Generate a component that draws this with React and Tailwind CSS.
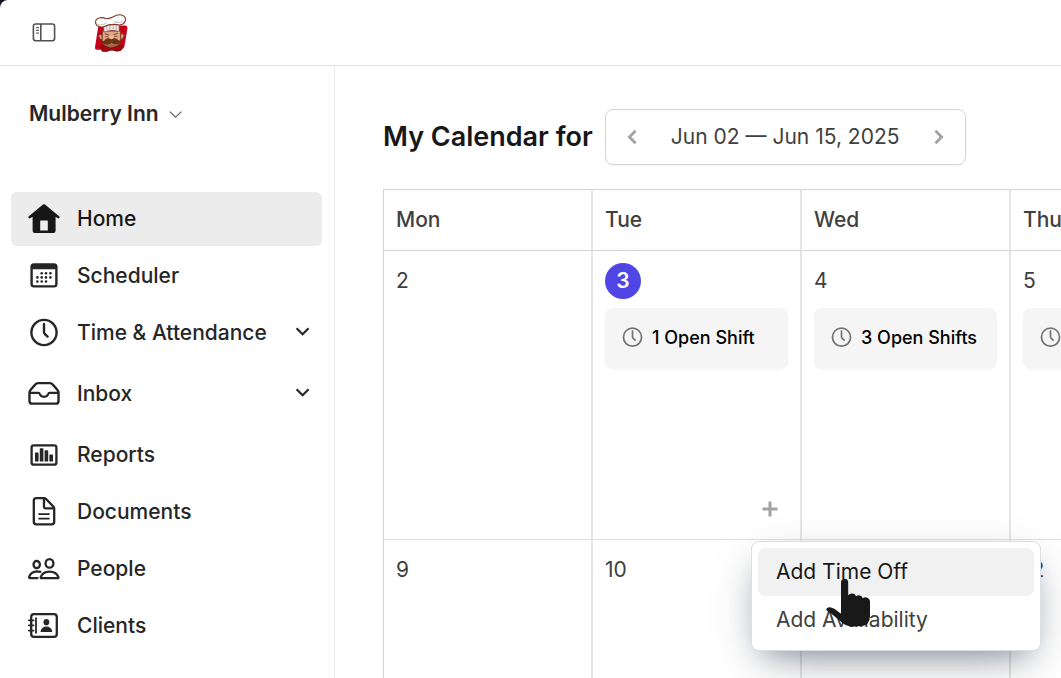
import React, { useState } from 'react';

const HomeIcon = () => (
  <svg viewBox="0 0 32 32" className="w-8 h-8 shrink-0" aria-hidden="true">
    <path
      d="M15 1.6Q16 .8 17 1.6L31.4 13.6Q32 14.4 31.3 15.1Q30.7 15.7 29.8 15.3L27.6 13.8V27.7Q27.6 29.9 25.4 29.9H6.8Q4.6 29.9 4.6 27.7V13.8L2.2 15.3Q1.3 15.7 .7 15.1Q0 14.4 .6 13.6ZM12.2 18.2V27.6H19.8V18.2Q19.8 17.6 19.2 17.6H12.8Q12.2 17.6 12.2 18.2Z"
      fill="currentColor"
      fillRule="evenodd"
    />
  </svg>
);

const SchedulerIcon = () => (
  <svg viewBox="0 0 32 32" className="w-8 h-8 shrink-0" aria-hidden="true">
    <rect x="3.6" y="4.5" width="24.8" height="21.9" rx="2.4" fill="none" stroke="currentColor" strokeWidth="2.4" />
    <path d="M3.4 9.2V6.5Q3.4 4 6 4H26Q28.6 4 28.6 6.5V9.2Z" fill="currentColor" />
    <g fill="currentColor">
      <circle cx="13.7" cy="13.2" r="1.3" />
      <circle cx="18" cy="13.2" r="1.3" />
      <circle cx="22.4" cy="13.2" r="1.3" />
      <circle cx="9.4" cy="17.4" r="1.3" />
      <circle cx="13.7" cy="17.4" r="1.3" />
      <circle cx="18" cy="17.4" r="1.3" />
      <circle cx="22.4" cy="17.4" r="1.3" />
      <circle cx="9.4" cy="21.5" r="1.3" />
      <circle cx="13.7" cy="21.5" r="1.3" />
      <circle cx="18" cy="21.5" r="1.3" />
    </g>
  </svg>
);

const ClockIcon = ({ className = 'w-8 h-8' }) => (
  <svg viewBox="0 0 32 32" className={`${className} shrink-0`} fill="none" stroke="currentColor" strokeWidth="2.4" strokeLinecap="round" strokeLinejoin="round" aria-hidden="true">
    <circle cx="16" cy="15.5" r="12.6" />
    <path d="M16 7V15Q16 16.2 16.8 17L19.6 19.6" />
  </svg>
);

const InboxIcon = () => (
  <svg viewBox="0 0 32 32" className="w-8 h-8 shrink-0" fill="none" stroke="currentColor" strokeWidth="2.4" strokeLinejoin="round" aria-hidden="true">
    <path d="M1.5 14.8Q1.5 13.2 2.5 12L7.2 6.6Q8.4 5.1 10.2 5.1H21.8Q23.6 5.1 24.8 6.6L29.5 12Q30.5 13.2 30.5 14.8V22.9Q30.5 25.6 27.8 25.6H4.2Q1.5 25.6 1.5 22.9Z" />
    <path d="M1.4 14.8H10.4Q11.6 14.8 11.8 16Q12.6 18.8 16 18.8Q19.4 18.8 20.2 16Q20.4 14.8 21.6 14.8H30.6" strokeWidth="2.2" />
  </svg>
);

const ReportsIcon = () => (
  <svg viewBox="0 0 32 32" className="w-8 h-8 shrink-0" aria-hidden="true">
    <rect x="3.6" y="6.3" width="24.8" height="19.4" rx="2.2" fill="none" stroke="currentColor" strokeWidth="2.3" />
    <g fill="currentColor">
      <rect x="7" y="13.4" width="3.6" height="9.1" rx=".6" />
      <rect x="11.8" y="9.2" width="3.6" height="13.3" rx=".6" />
      <rect x="16.6" y="11.2" width="3.6" height="11.3" rx=".6" />
      <rect x="21.4" y="15.6" width="3.6" height="6.9" rx=".6" />
    </g>
  </svg>
);

const DocumentsIcon = () => (
  <svg viewBox="0 0 32 32" className="w-8 h-8 shrink-0" fill="none" stroke="currentColor" strokeWidth="2.3" strokeLinejoin="round" aria-hidden="true">
    <path d="M16 2.1H8.4Q5.8 2.1 5.8 4.6V25.8Q5.8 28.4 8.4 28.4H23.6Q26.2 28.4 26.2 25.8V12.6Q26.2 11.4 25.4 10.6L17.8 2.8Q17 2.1 16 2.1Z" />
    <path d="M16 2V10.4Q16 12.4 18 12.4H26" />
    <path d="M10.4 18.2H21.6M10.4 22.6H21.6" strokeWidth="1.8" />
  </svg>
);

const PeopleIcon = () => (
  <svg viewBox="0 0 32 32" className="w-8 h-8 shrink-0" fill="none" stroke="currentColor" strokeWidth="2.3" strokeLinecap="round" strokeLinejoin="round" aria-hidden="true">
    <ellipse cx="8.7" cy="11.6" rx="3.2" ry="3.6" />
    <ellipse cx="21.5" cy="10.4" rx="3.9" ry="4.3" />
    <path d="M13.6 25.2Q12.4 25.2 12.8 23.9Q14.8 18.6 21.5 18.6Q28.4 18.6 30.3 23.9Q30.7 25.2 29.6 25.2Z" />
    <path d="M12.2 18.9Q10.6 18.4 8.9 18.4Q3 18.8 1.3 23.6Q.9 25.2 2 25.2H9.4" />
  </svg>
);

const ClientsIcon = () => (
  <svg viewBox="0 0 32 32" className="w-8 h-8 shrink-0" aria-hidden="true">
    <rect x="3.2" y="4.2" width="25.6" height="22.6" rx="2.8" fill="none" stroke="currentColor" strokeWidth="2.3" />
    <path d="M8 7.6V23.6" stroke="currentColor" strokeWidth="1.8" />
    <path d="M.8 10.4H5.6M.8 15.4H5.6M.8 20.6H5.6" stroke="currentColor" strokeWidth="1.7" strokeLinecap="round" />
    <ellipse cx="18.4" cy="12.2" rx="2.9" ry="3.1" fill="currentColor" />
    <path d="M12.8 22Q12.4 22 12.6 21Q13.8 16.4 18.4 16.4Q23 16.4 24.2 21Q24.4 22 24 22Z" fill="currentColor" />
  </svg>
);

const Chevron = ({ d, className }) => (
  <svg viewBox="0 0 16 16" className={`${className} shrink-0`} fill="none" stroke="currentColor" aria-hidden="true">
    <path d={d} />
  </svg>
);

const SidebarToggleIcon = () => (
  <svg viewBox="0 0 24 24" className="w-6 h-6" fill="none" stroke="currentColor" strokeWidth="1.6" aria-hidden="true">
    <rect x="1.4" y="3" width="21.2" height="16.8" rx="2.2" />
    <path d="M8.8 3V19.8" />
    <path d="M4.2 6.6H6.8M4.2 9.4H6.8M4.2 12.2H6.8" strokeWidth="1.2" />
  </svg>
);

const ChefLogo = () => (
  <svg viewBox="0 0 36 40" className="w-9 h-10" aria-hidden="true">
    <path d="M5.4 12.8L32 12.4Q34.8 12.6 34.4 15.6L31.4 33.6Q30.8 36 28.6 36.2L4.4 36.8Q1.8 36.8 2 34.2Z" fill="#c4001a" />
    <path d="M9 22Q5.8 20.4 5.8 23.6Q6.2 26.6 9.6 27ZM27.8 21.2Q31 20 31 23Q30.4 26 27.2 26.6Z" fill="#d9a27e" stroke="#7d3a22" strokeWidth=".8" />
    <path d="M9.4 18H27.6V26Q27 34.2 18.3 35.2Q10 34.4 9.2 26.4Z" fill="#dba683" stroke="#7d3a22" strokeWidth=".9" />
    <path d="M10 28Q12 34.6 18.3 35.2Q25 34.6 27 27.6Z" fill="#a5694a" />
    <path d="M10.6 12.6Q18 9.6 26 11.2L26.2 18.4Q18 16 11 19Z" fill="#f0ebe8" stroke="#8a5240" strokeWidth=".7" />
    <path d="M14 12.4V17.2M17 12V16.8M20.2 11.8V16.8M23.2 12V17.2" stroke="#b5a8a2" strokeWidth=".9" />
    <path d="M10.6 13.8Q4.6 14.6 2.8 10.8Q1.6 6.6 6 5Q9.6 4 13 5.8Q17.4 5.6 20.4 3.8Q24.4 1.2 28.6 2Q33.2 3.2 32.4 7.6Q31.2 11.6 26.4 12Q18 10.2 10.6 13.8Z" fill="#fff" stroke="#7e3626" strokeWidth="1.1" />
    <path d="M5 11Q10 13 13.4 9.6M21 8.6Q26 10.6 30.6 7.8" fill="none" stroke="#d0c6c1" strokeWidth="1.2" />
    <path d="M12 20.6L16 22M20.8 21.8L24.8 20.2" stroke="#8c5238" strokeWidth="1.2" />
    <path d="M12.4 24Q14.2 22.8 15.8 24.2M21 24Q22.6 22.6 24.4 23.6" fill="none" stroke="#7b3e28" strokeWidth=".8" />
    <ellipse cx="18.4" cy="24.6" rx="2.3" ry="2.1" fill="#efbd99" />
    <path d="M18.4 26.2Q13.8 24 11.4 27.4Q10 29 7.6 28Q10 32.4 14.8 31.4Q17.4 30.8 18.4 29.4Q19.8 30.8 22.4 31.2Q27 31.6 29.4 27.2Q26.8 28.6 25.2 27Q22.6 24 18.4 26.2Z" fill="#6b3415" />
    <path d="M17.6 35.2L11.4 32.8Q7.6 32.4 8.2 35L9 38.2Q13.4 39.4 17.6 37.2L20.2 37.2Q24 39.2 28.2 37.2L29.6 33.8Q29.2 32.2 26.6 32.6Z" fill="#a3080f" stroke="#6d100f" strokeWidth=".8" />
  </svg>
);

const PointerHand = () => (
  <svg viewBox="0 0 45 50" className="w-[45px] h-[50px]" aria-hidden="true">
    <path
      d="M15 4.6Q15 .8 18.6 .8Q22.2 .8 22.2 4.6V17.2Q24 15.2 26.8 15.6Q29.2 16 30 18.2Q31.8 16.8 34 17.4Q36.2 18 36.8 20.2Q38.6 18.8 40.8 19.4Q44 20.4 44 24V38Q44 48.2 34 48.2H26Q20.6 48.2 17.2 45.4L4.8 35.2Q.2 33 .2 31Q1.4 28.8 5 29.4Q8.4 30.2 11.4 33Q13.4 35 15 35.4Z"
      fill="#191919"
    />
  </svg>
);

const DOWN = 'M2.6 3.2L8.6 9.2L14.6 3.2';

const navItems = [
  { name: 'Home', icon: HomeIcon },
  { name: 'Scheduler', icon: SchedulerIcon },
  { name: 'Time & Attendance', icon: ClockIcon, expandable: true },
  { name: 'Inbox', icon: InboxIcon, expandable: true },
  { name: 'Reports', icon: ReportsIcon },
  { name: 'Documents', icon: DocumentsIcon },
  { name: 'People', icon: PeopleIcon },
  { name: 'Clients', icon: ClientsIcon },
];

const weekdays = ['Mon', 'Tue', 'Wed', 'Thu', 'Fri', 'Sat', 'Sun'];

const weeks = [
  [2, 3, 4, 5, 6, 7, 8],
  [9, 10, 11, 12, 13, 14, 15],
];

const openShifts = { 3: 1, 4: 3, 5: 2 };
const today = 3;

function Sidebar() {
  const [active, setActive] = useState('Home');
  const base = 'flex w-full h-[54px] items-center gap-[17px] rounded-md pl-[17px] pr-3 text-left';

  return (
    <aside className="w-[335px] shrink-0 border-r border-[#ebebeb] pt-6 pl-[11px] pr-3">
      <button type="button" className="flex h-12 items-center gap-2 pl-[18px] text-[21px] font-semibold text-[#262626]">
        Mulberry Inn
        <Chevron d="M2.8 5.6L8.6 11.2L14.4 5.6" className="w-4 h-4 stroke-[1.3] text-[#666]" />
      </button>

      <nav className="mt-[54px] flex flex-col gap-[3px]">
        {navItems.map(({ name, icon: Icon, expandable }) => {
          const className = active === name ? `${base} bg-[#ececec] text-[#171717]` : `${base} text-[#262626]`;
          if (expandable) {
            return (
              <div key={name} className="pb-1">
                <button type="button" className={className} onClick={() => setActive(name)}>
                  <Icon />
                  <span className="grow text-[21px] font-medium">{name}</span>
                  <Chevron d={DOWN} className="w-4 h-4 stroke-[2.2]" />
                </button>
              </div>
            );
          }
          return (
            <a key={name} href="#" className={className} onClick={() => setActive(name)}>
              <Icon />
              <span className="text-[21px] font-medium">{name}</span>
            </a>
          );
        })}
      </nav>
    </aside>
  );
}

function AddMenu() {
  return (
    <div className="absolute right-3 bottom-3 z-10">
      <button type="button" aria-label="Add" className="flex w-9 h-9 items-center justify-center text-[#a3a3a3]">
        <svg viewBox="0 0 16 16" className="w-4 h-4" stroke="currentColor" strokeWidth="3" aria-hidden="true">
          <path d="M8 .5V15.5M.5 8H15.5" />
        </svg>
      </button>
      <div
        role="menu"
        className="absolute -left-px top-[50px] w-[290px] rounded-lg border border-[#d9dfe3] bg-white p-[6px] text-[21px] shadow-[0_15px_53px_-15px_rgba(14,18,22,0.35),0_15px_30px_-12px_rgba(45,75,105,0.4)]"
      >
        <button type="button" role="menuitem" className="block h-12 w-full rounded-lg bg-[#f1f1f1] pl-[18px] text-left text-[#171717]">
          Add Time Off
        </button>
        <button type="button" role="menuitem" className="block h-12 w-full rounded-lg pl-[18px] text-left text-[#404040]">
          Add Availability
        </button>
        <div className="pointer-events-none absolute left-[74px] top-9">
          <PointerHand />
        </div>
      </div>
    </div>
  );
}

function DayCell({ day }) {
  const shifts = openShifts[day];

  return (
    <td className="border-r-2 border-b border-r-[#e5e5e5] border-b-[#e0e0e0] p-0 align-top">
      <div className="relative h-72 p-3 text-[21px]">
        {day === today ? (
          <div className="flex w-9 h-9 items-center justify-center rounded-full bg-[#4f46e5] font-semibold text-white">{day}</div>
        ) : (
          <div className="flex h-9 items-center text-[#404040]">{day}</div>
        )}
        {shifts && (
          <button type="button" className="mt-[9px] flex h-[61px] w-full items-center gap-2 rounded-lg bg-[#f5f5f5] pb-[2px] pl-4 text-black shadow-[0_1px_2px_rgba(0,0,0,0.03)]">
            <ClockIcon className="w-[23px] h-[23px] text-[#737373]" />
            <span className="text-lg font-medium whitespace-nowrap">
              {shifts} Open {shifts === 1 ? 'Shift' : 'Shifts'}
            </span>
          </button>
        )}
        {day === today && <AddMenu />}
      </div>
    </td>
  );
}

export default function App() {
  return (
    <div className="bg-[#160a1c] font-['Inter',sans-serif]">
      <div className="flex h-screen flex-col overflow-hidden rounded-tl-lg bg-white">
        <header className="flex h-[66px] shrink-0 items-center gap-[37px] border-b border-[#e2e2e2] pl-8">
          <button type="button" aria-label="Toggle sidebar" className="text-[#525252]">
            <SidebarToggleIcon />
          </button>
          <a href="#" aria-label="Dashboard">
            <ChefLogo />
          </a>
        </header>

        <div className="flex min-h-0 grow">
          <Sidebar />

          <main className="min-w-0 grow overflow-hidden pt-[43px] pl-12">
            <div className="mb-6 flex items-center gap-3">
              <h1 className="text-[27px] font-semibold whitespace-nowrap text-[#171717]">My Calendar for</h1>
              <div className="flex h-14 w-[361px] items-center justify-between rounded-lg border border-[#d4d4d4] px-[18px] shadow-[0_1px_2px_rgba(0,0,0,0.05)]">
                <button type="button" aria-label="Previous" className="text-[#a3a3a3]">
                  <Chevron d="M11.6 1.8L5.4 8L11.6 14.2" className="w-4 h-4 stroke-[2.8]" />
                </button>
                <span className="text-[21px] text-[#404040]">Jun 02 — Jun 15, 2025</span>
                <button type="button" aria-label="Next" className="text-[#a3a3a3]">
                  <Chevron d="M4.4 1.8L10.6 8L4.4 14.2" className="w-4 h-4 stroke-[2.8]" />
                </button>
              </div>
            </div>

            <table className="w-[1464px] table-fixed border-separate border-spacing-0 border-l border-[#d4d4d4]">
              <thead>
                <tr>
                  {weekdays.map((d) => (
                    <th
                      key={d}
                      scope="col"
                      className="h-[62px] border-t border-r-2 border-b border-y-[#d4d4d4] border-r-[#e5e5e5] px-3 text-left text-[21px] font-medium text-[#404040]"
                    >
                      {d}
                    </th>
                  ))}
                </tr>
              </thead>
              <tbody>
                {weeks.map((week) => (
                  <tr key={week[0]}>
                    {week.map((day) => (
                      <DayCell key={day} day={day} />
                    ))}
                  </tr>
                ))}
              </tbody>
            </table>
          </main>
        </div>
      </div>
    </div>
  );
}
